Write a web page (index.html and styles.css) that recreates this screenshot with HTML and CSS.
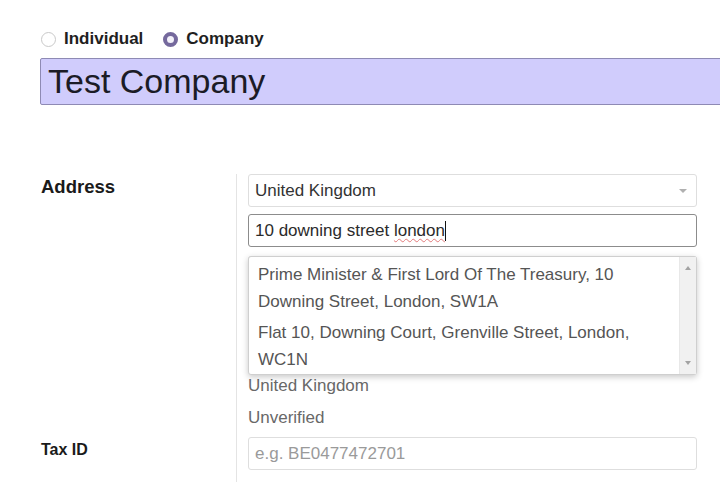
FILE: index.html
```html
<!DOCTYPE html>
<html>
<head>
<meta charset="utf-8">
<link rel="stylesheet" href="styles.css">
</head>
<body>
<div class="page">
  <div class="type-row">
    <label class="radio"><span class="dot"></span><span>Individual</span></label>
    <label class="radio checked"><span class="dot"></span><span>Company</span></label>
  </div>
  <div class="name-input">Test Company</div>

  <div class="form">
    <div class="label label-address">Address</div>
    <div class="field">
      <div class="input select">
        <span>United Kingdom</span>
        <span class="caret"></span>
      </div>
      <div class="street-wrap">
        <div class="input focused">10 downing street <span class="misspelled">london</span><span class="cursor"></span></div>
        <div class="autocomplete">
          <div class="ac-list">
            <div class="ac-item">Prime Minister &amp; First Lord Of The Treasury, 10 Downing Street, London, SW1A</div>
            <div class="ac-item">Flat 10, Downing Court, Grenville Street, London, WC1N</div>
          </div>
          <div class="ac-scroll">
            <span class="arrow up"></span>
            <span class="arrow down"></span>
          </div>
        </div>
      </div>
      <div class="more-fields">
        <div class="input"></div>
        <div class="input"></div>
        <div class="input"></div>
      </div>
      <div class="static country">United Kingdom</div>
      <div class="static status">Unverified</div>
    </div>

    <div class="label label-tax">Tax ID</div>
    <div class="field field-tax">
      <div class="input placeholder">e.g. BE0477472701</div>
    </div>
  </div>
</div>
</body>
</html>
```

FILE: styles.css
```css
html, body {
  margin: 0;
  padding: 0;
  background: #ffffff;
  overflow: hidden;
}
body {
  width: 720px;
  height: 482px;
  font-family: "Liberation Sans", Arial, sans-serif;
  color: #222;
}
.page {
  padding-left: 40px;
  padding-top: 29px;
}
.type-row {
  display: flex;
  align-items: center;
  height: 20px;
}
.radio {
  display: flex;
  align-items: center;
  gap: 8px;
  font-size: 17px;
  font-weight: bold;
  color: #1f1f1f;
  margin-right: 19px;
  margin-left: 1px;
}
.dot {
  box-sizing: border-box;
  width: 15px;
  height: 15px;
  border-radius: 50%;
  border: 1px solid #c9c9c9;
  background: #fff;
}
.radio.checked .dot {
  border: 4.5px solid #75699d;
  background: #f3f1fa;
}
.name-input {
  box-sizing: border-box;
  margin-top: 9px;
  height: 47px;
  width: 700px;
  background: #d0ccfc;
  border: 1px solid #8e8ab4;
  border-radius: 2px;
  font-size: 34px;
  line-height: 45px;
  padding-left: 7px;
  color: #1b1b26;
}
.form {
  margin-top: 69px;
  display: grid;
  grid-template-columns: 196px 461px;
}
.label {
  font-weight: bold;
  color: #1a1a1a;
  padding-left: 1px;
}
.label-address {
  font-size: 18.5px;
  line-height: 22px;
  padding-top: 2px;
}
.label-tax {
  font-size: 16px;
  line-height: 20px;
  padding-top: 11px;
}
.field {
  border-left: 1px solid #e4e4e4;
  padding-left: 11px;
  display: flex;
  flex-direction: column;
}
.field-tax {
  padding-top: 8px;
  padding-bottom: 12px;
}
.input {
  box-sizing: border-box;
  height: 33px;
  width: 449px;
  border: 1px solid #dedede;
  border-radius: 3px;
  font-size: 17px;
  line-height: 31px;
  padding-left: 6px;
  color: #333;
  background: #fff;
  display: flex;
  align-items: center;
}
.select {
  justify-content: space-between;
  padding-right: 9px;
}
.caret {
  width: 0;
  height: 0;
  border-left: 4px solid transparent;
  border-right: 4px solid transparent;
  border-top: 4px solid #b0b0b0;
}
.street-wrap {
  position: relative;
  margin-top: 7px;
}
.input.focused {
  border-color: #8c8c8c;
  color: #2b2b2b;
  white-space: pre;
}
.misspelled {
  text-decoration: underline wavy #e27a7a;
  text-decoration-thickness: 1px;
  text-underline-offset: 2px;
}
.cursor {
  display: inline-block;
  width: 1px;
  height: 20px;
  background: #111;
}
.autocomplete {
  position: absolute;
  top: 42px;
  left: 0;
  width: 449px;
  height: 119px;
  box-sizing: border-box;
  background: #fff;
  border: 1px solid #cfcfcf;
  border-radius: 3px;
  box-shadow: 0 2px 6px rgba(0, 0, 0, 0.22);
  display: flex;
  z-index: 5;
}
.ac-list {
  flex: 1;
  padding: 2px 0;
}
.ac-item {
  padding: 2px 9px;
  font-size: 17px;
  line-height: 27px;
  color: #555;
}
.ac-scroll {
  width: 16px;
  background: #f1f1f1;
  border-left: 1px solid #e8e8e8;
  display: flex;
  flex-direction: column;
  justify-content: space-between;
  align-items: center;
  padding: 9px 0 9px;
}
.arrow {
  width: 0;
  height: 0;
  border-left: 3.5px solid transparent;
  border-right: 3.5px solid transparent;
}
.arrow.up {
  border-bottom: 4px solid #a3a3a3;
}
.arrow.down {
  border-top: 4px solid #a3a3a3;
}
.more-fields {
  display: flex;
  flex-direction: column;
  gap: 7px;
  margin-top: 9px;
  margin-bottom: 6px;
}
.static {
  font-size: 17px;
  line-height: 22px;
  color: #686868;
}
.status {
  margin-top: 10px;
  padding-bottom: 0;
}
.placeholder {
  color: #9a9a9a;
}
```
